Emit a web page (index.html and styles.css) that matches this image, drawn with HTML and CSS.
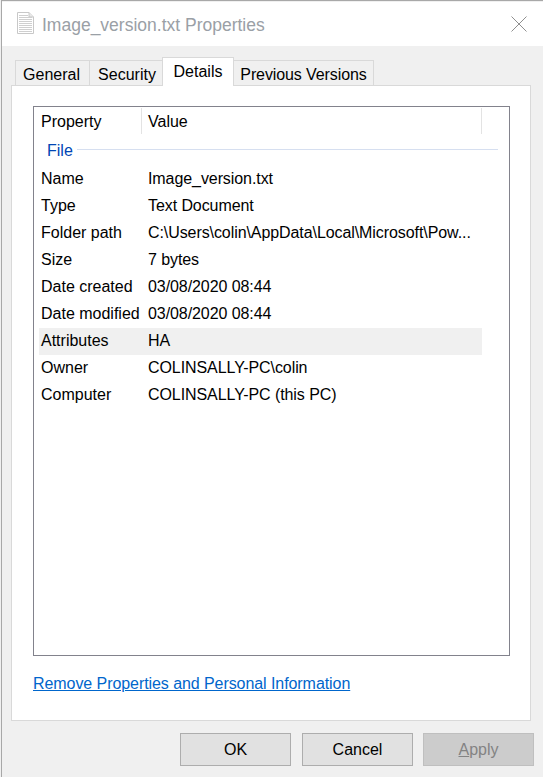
FILE: index.html
```html
<!DOCTYPE html>
<html lang="en">
<head>
<meta charset="utf-8">
<title>Image_version.txt Properties</title>
<link rel="stylesheet" href="styles.css">
</head>
<body>
<div class="window">
  <header class="titlebar">
    <svg class="file-icon" width="17" height="22" viewBox="0 0 17 22">
      <path d="M.5.5H12L16.500 5V21.500H.5Z" fill="#fff" stroke="#c8c8c8"/>
      <path d="M12 .5V5H16.500" fill="#e8e8e8" stroke="#c8c8c8"/>
      <path d="M2 3.500H11M2 5.500H15M2 7.500H15M2 9.500H15M2 11.500H15M2 13.500H15M2 15.500H15M2 17.500H15M2 19.500H15" stroke="#cfcfcf" fill="none"/>
    </svg>
    <span class="title">Image_version.txt Properties</span>
    <svg class="close" width="16" height="16" viewBox="0 0 16 16"><path d="M.5.5L15.500 15.500M15.500.5L.5 15.500" stroke="#8f8f8f" fill="none"/></svg>
  </header>
  <div class="body">
    <nav class="tabs">
      <div class="tab t-general">General</div>
      <div class="tab t-security">Security</div>
      <div class="tab active">Details</div>
      <div class="tab t-prev">Previous Versions</div>
    </nav>
    <section class="pane">
      <div class="list">
        <div class="head">
          <div class="h-prop">Property</div>
          <div class="h-val">Value</div>
        </div>
        <div class="group"><span>File</span><i></i></div>
        <div class="row"><div class="k">Name</div><div class="v">Image_version.txt</div></div>
        <div class="row"><div class="k">Type</div><div class="v">Text Document</div></div>
        <div class="row"><div class="k">Folder path</div><div class="v">C:\Users\colin\AppData\Local\Microsoft\Pow...</div></div>
        <div class="row"><div class="k">Size</div><div class="v">7 bytes</div></div>
        <div class="row"><div class="k">Date created</div><div class="v">03/08/2020 08:44</div></div>
        <div class="row"><div class="k">Date modified</div><div class="v">03/08/2020 08:44</div></div>
        <div class="row selected"><div class="k">Attributes</div><div class="v">HA</div></div>
        <div class="row"><div class="k">Owner</div><div class="v">COLINSALLY-PC\colin</div></div>
        <div class="row"><div class="k">Computer</div><div class="v">COLINSALLY-PC (this PC)</div></div>
      </div>
      <a class="link" href="#">Remove Properties and Personal Information</a>
    </section>
    <footer class="buttons">
      <button class="btn">OK</button>
      <button class="btn">Cancel</button>
      <button class="btn disabled"><u>A</u>pply</button>
    </footer>
  </div>
</div>
</body>
</html>
```
FILE: styles.css
```css
* { box-sizing: border-box; }
html, body { margin: 0; height: 100%; }
body {
  width: 543px; height: 777px; overflow: hidden; background: #f0f0f0;
  font-family: "Liberation Sans", Arial, sans-serif; font-size: 16px; color: #000;
}
.window { height: 777px; padding-top: 1px; display: flex; flex-direction: column; border-top: 1px solid #a8a8a8; border-left: 1px solid #a8a8a8; margin-left: 1px; }
.titlebar { height: 44px; background: #fff; display: flex; align-items: center; padding-left: 15px; flex: none; }
.file-icon { flex: none; margin-top: -2px; }
.title { margin-left: 8px; font-size: 17.5px; color: #9aa0a6; padding-top: 2px; }
.close { margin-left: auto; margin-right: 16px; }
.body { flex: 1; display: flex; flex-direction: column; background: #f0f0f0; padding: 0 0 0 9px; }
.tabs { display: flex; height: 39px; padding: 14px 0 0 4px; position: relative; z-index: 1; align-items: flex-end; }
.tab { height: 25px; border: 1px solid #d9d9d9; border-bottom: 0; border-left: 0; line-height: 27px; text-align: center; background: #f0f0f0; }
.t-general { width: 75px; border-left: 1px solid #d9d9d9; padding-right: 2px; }
.t-security { width: 73px; padding-left: 2px; }
.active { width: 72px; height: 29px; background: #fff; margin-bottom: -1px; border-left: 1px solid #d9d9d9; margin-left: -1px; line-height: 27px; }
.t-prev { width: 140px; letter-spacing: -0.1px; }
.pane { width: 520px; height: 636px; background: #fff; border: 1px solid #d9d9d9; padding: 20px 21px 0 21px; flex: none; }
.list { width: 477px; height: 550px; border: 1px solid #82828c; padding: 1px 0 0 5px; }
.head { display: flex; height: 26px; width: 443px; line-height: 28px; }
.h-prop { width: 103px; padding-left: 2px; border-right: 1px solid #e3e3e3; }
.h-val { flex: 1; padding-left: 6px; border-right: 1px solid #e3e3e3; }
.group { display: flex; align-items: center; height: 18px; padding-left: 8px; color: #0046b4; width: 459px; margin-top: 6px; }
.group span { line-height: 18px; padding-top: 3px; }
.group i { flex: 1; height: 1px; background: #d6dff0; margin-left: 4px; }
.row { display: flex; height: 27px; line-height: 26px; width: 443px; }
.row:nth-child(3) { margin-top: 8px; }
.selected { background: #f0f0f0; }
.k { width: 107px; padding-left: 2px; flex: none; white-space: nowrap; }
.v { padding-left: 2px; white-space: nowrap; letter-spacing: -0.08px; }
.link { display: inline-block; margin-top: 18px; color: #0066cc; text-decoration: underline; line-height: 20px; letter-spacing: -0.07px; }
.buttons { display: flex; gap: 11px; padding: 12px 0 0 169px; }
.btn { width: 111px; height: 33px; background: #e1e1e1; border: 1px solid #adadad; font: inherit; color: #000; padding: 0; }
.disabled { background: #cccccc; border-color: #bfbfbf; color: #838383; margin-left: -1px; }
```
